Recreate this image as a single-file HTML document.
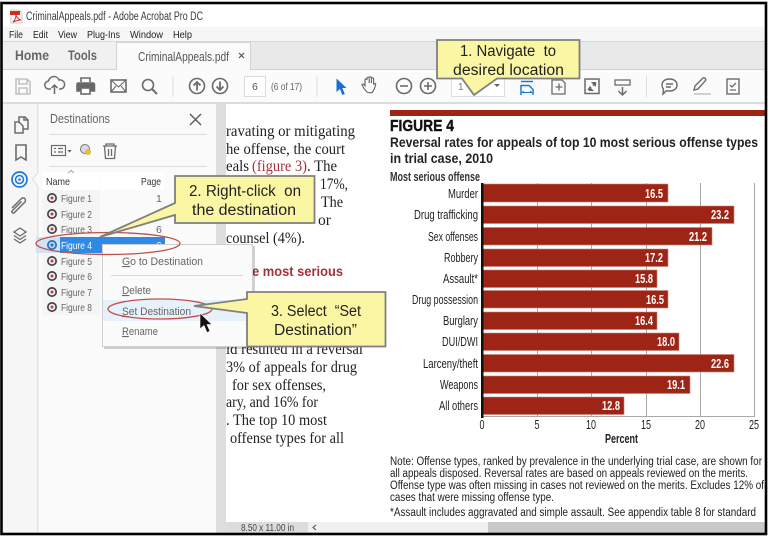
<!DOCTYPE html>
<html><head><meta charset="utf-8"><style>
html,body{margin:0;padding:0;background:#fff;width:769px;height:537px;overflow:hidden}
svg{display:block;position:absolute;left:0;top:0;filter:blur(.35px)}
text{white-space:pre}
.u{font-family:"Liberation Sans",sans-serif;fill:#3c3c3c}
.s{font-family:"Liberation Serif",serif;font-size:15.5px;fill:#222}
.c{font-family:"Liberation Sans",sans-serif;font-size:13px;fill:#222}
.v{font-family:"Liberation Sans",sans-serif;font-size:12.5px;font-weight:bold;fill:#fff}
.n{font-family:"Liberation Sans",sans-serif;font-size:11.5px;fill:#222}
.k{font-family:"Liberation Sans",sans-serif;font-size:15.5px;fill:#222}
.i{fill:none;stroke:#6b6b6b;stroke-width:1.6}
.b{fill:#9e2515;stroke:#c8857a;stroke-width:.6}
.g{stroke:#a8a8a8;stroke-width:1}
</style></head><body>
<svg width="769" height="537" viewBox="0 0 769 537" xmlns="http://www.w3.org/2000/svg">
<rect width="769" height="537" fill="#fff"/>
<!-- chrome -->
<rect x="3" y="27" width="763" height="15" fill="#f6f6f6"/>
<rect x="3" y="41" width="763" height="1.5" fill="#d8d8d8"/>
<rect x="3" y="42" width="763" height="27" fill="#e9e9e9"/>
<rect x="3" y="42" width="114" height="27" fill="#f1f1f1"/>
<rect x="117" y="43" width="133" height="26" fill="#fafafa"/>
<rect x="116.5" y="42.5" width="134" height="27" fill="none" stroke="#d2d2d2"/>
<rect x="117" y="68" width="133" height="3" fill="#fafafa"/>
<rect x="3" y="69" width="114" height="1" fill="#d2d2d2"/>
<rect x="250" y="69" width="516" height="1" fill="#d2d2d2"/>
<rect x="3" y="70" width="763" height="33" fill="#fbfbfb"/>
<rect x="3" y="102" width="763" height="2" fill="#dcdcdc"/>
<!-- title icon -->
<path d="M11 10h8l3 3v10H11z" fill="#fff" stroke="#bbb" stroke-width=".8"/>
<rect x="10" y="11" width="10" height="4" fill="#d42b1e"/>
<path d="M13 22c2-2 3-4 3-7 1 3 2 4 5 5-3 0-5 1-8 2z" fill="none" stroke="#d42b1e"/>
<text class="u" x="26" y="20" style="font-size:11.5px" textLength="177" lengthAdjust="spacingAndGlyphs">CriminalAppeals.pdf - Adobe Acrobat Pro DC</text>
<g>
<text class="u" style="fill:#222;font-size:10.5px" x="9" y="38" textLength="14" lengthAdjust="spacingAndGlyphs">File</text>
<text class="u" style="fill:#222;font-size:10.5px" x="33" y="38" textLength="15" lengthAdjust="spacingAndGlyphs">Edit</text>
<text class="u" style="fill:#222;font-size:10.5px" x="58" y="38" textLength="19" lengthAdjust="spacingAndGlyphs">View</text>
<text class="u" style="fill:#222;font-size:10.5px" x="87" y="38" textLength="33" lengthAdjust="spacingAndGlyphs">Plug-Ins</text>
<text class="u" style="fill:#222;font-size:10.5px" x="130" y="38" textLength="33" lengthAdjust="spacingAndGlyphs">Window</text>
<text class="u" style="fill:#222;font-size:10.5px" x="173" y="38" textLength="19" lengthAdjust="spacingAndGlyphs">Help</text>
</g>
<text class="u" x="15" y="60" style="font-size:13.5px;font-weight:bold;fill:#666" textLength="34" lengthAdjust="spacingAndGlyphs">Home</text>
<text class="u" x="68" y="60" style="font-size:13.5px;font-weight:bold;fill:#666" textLength="29" lengthAdjust="spacingAndGlyphs">Tools</text>
<text class="u" x="138" y="61" style="font-size:12.5px;fill:#555" textLength="91" lengthAdjust="spacingAndGlyphs">CriminalAppeals.pdf</text>
<path d="M239 53l5 5M244 53l-5 5" stroke="#555" stroke-width="1.2"/>

<!-- toolbar icons -->
<g class="i">
<path d="M16 79h11l3 3v12H16zM19 79v5h8v-5M19 94v-6h8v6" stroke="#c2c2c2"/>
<path d="M51 89h-2a4 4 0 0 1-.5-8 5.500 5.500 0 0 1 10.500-1 4.500 4.500 0 0 1 2 9h-2M54.500 94v-9M51.500 88l3-3 3 3" stroke-width="1.5"/>
<path d="M81 82v-4h9v4"/>
<path d="M78 83h15a1.5 1.5 0 0 1 1.5 1.500V91H77v-6.500A1.500 1.500 0 0 1 78 83z" fill="#666"/>
<rect x="81" y="88" width="9" height="6" fill="#fff"/>
<rect x="111" y="80" width="15" height="12"/>
<path d="M111 80l7.5 7 7.5-7M111 92l5-6M126 92l-5-6" stroke-width="1.100"/>
<circle cx="148" cy="85" r="5.5"/><path d="M152 89l5 5" stroke-width="2"/>
<circle cx="197" cy="86" r="7.500"/><path d="M197 90.500v-8.500M193.500 85.500l3.500-3.500 3.500 3.500" stroke-width="1.800"/>
<circle cx="220" cy="86" r="7.500"/><path d="M220 81.500v8.500M216.500 86.500l3.500 3.500 3.500-3.500" stroke-width="1.800"/>
<path d="M367 92c-2-2-4-5-5-7 0-1.500 2-1 3 .5V80c0-1.500 2-1.500 2 0v-1.500c0-1.500 2.200-1.500 2.200 0V78c0-1.500 2.200-1.500 2.200 0v1c0-1.500 2.200-1.500 2.200 0v5l.6 0c1-1 1.800-.5 1.400 1-.7 3-1.600 5-3 7-.4 1-5 1-5.600 0zM369.200 79v4M371.400 78.500v4.500M373.600 79v4" stroke-width="1.200"/>
<circle cx="404" cy="86" r="7.500"/><path d="M400 86h8"/>
<circle cx="428" cy="86" r="7.500"/><path d="M424 86h8M428 82v8"/>
</g>
<rect x="172.5" y="76" width="1" height="21" fill="#dedede"/>
<rect x="244.5" y="76.5" width="21" height="20" fill="#fff" stroke="#dcdcdc"/>
<text class="u" x="252" y="90" style="font-size:10.5px;fill:#555">6</text>
<text class="u" x="271" y="90" style="font-size:10.5px;fill:#666" textLength="31" lengthAdjust="spacingAndGlyphs">(6 of 17)</text>
<rect x="316.5" y="76" width="1" height="21" fill="#dedede"/>
<path d="M336.500 78.500l10 9.500h-4.200l2.500 6-2.500 1-2.300-6-3.500 3z" fill="#1470d0"/>
<rect x="451.5" y="76.5" width="53" height="20" fill="#fff" stroke="#dcdcdc"/>
<text class="u" x="458" y="90" style="font-size:10px;fill:#777">1</text>
<path d="M494 84h6l-3 3z" fill="#666"/>
<g fill="none" stroke="#1878d8" stroke-width="1.500">
<path d="M521 81.500h12M521 95V85.500h8l4 4V95"/><path d="M522 92.500h10M522 92.500l2-1.500M532 92.500l-2-1.500" stroke-width="1"/>
</g>
<g class="i">
<path d="M552 80h10l3 3v11h-13zM559 83.500v7M555.500 87h7" stroke-width="1.300"/>
<rect x="585" y="79" width="14" height="14.500" stroke-width="1.500"/>
<path d="M588 90l3-3M596 82.500l-3 3" stroke-width="1.800"/>
</g>
<path d="M589 86v5h5zM596 87v-5h-5z" fill="#666"/>
<g class="i">
<rect x="615" y="80" width="15" height="5" stroke-width="1.300"/>
<path d="M622.500 87v7.500M618.500 91l4 4 4-4" stroke-width="1.500"/>
<path d="M662 85c0-4 3.500-6 7.500-6s7.500 2 7.500 6-3.500 6-7.500 6c-1 0-2 0-3-.3L663 94l.5-4.500C662.500 88 662 87 662 85zM666 84h7M666 87h5" stroke-width="1.400"/>
<path d="M694 90l1-4 8-8c1-1 3.500 1 2.500 2.500L698 89z" stroke-width="1.400"/>
<rect x="727" y="79" width="12" height="15" stroke-width="1.400"/>
<path d="M730 85l2 2 4-4M730 90h6" stroke-width="1.300"/>
</g>
<rect x="694" y="93" width="17" height="2" fill="#d0d0d0"/>
<rect x="646" y="76" width="1" height="21" fill="#dedede"/>

<!-- left rail and panel -->
<rect x="3" y="104" width="34" height="418" fill="#f6f6f6"/>
<rect x="37" y="104" width="1.5" height="429" fill="#e2e2e2"/>
<rect x="38.5" y="104" width="178" height="429" fill="#fafafa"/>
<rect x="216" y="104" width="10" height="429" fill="#dedede"/>
<rect x="3" y="522" width="34" height="11" fill="#f6f6f6"/>
<g class="i">
<path d="M19 123v-6h6l3 3v9h-5M24 117v3h4M15 122h4l4 4v7h-8z" stroke-width="1.500"/>
<path d="M16 145h10v15l-5-3-5 3z" stroke-width="1.600"/>
<path d="M17 213l9-9c3-3 6 1 3.500 3.500l-10 10c-1.500 1.500-3.500-.5-2-2l9-9" stroke-width="1.500" transform="translate(-5 -5)"/>
<path d="M20 228l-6 4 6 4 6-4zM14 235.500l6 4 6-4M14 239l6 4 6-4" stroke-width="1.300"/>
</g>
<circle cx="19.5" cy="179.500" r="7.500" fill="none" stroke="#1878d8" stroke-width="1.700"/>
<circle cx="19.5" cy="179.500" r="4" fill="none" stroke="#1878d8" stroke-width="1.500"/>
<circle cx="19.5" cy="179.500" r="1.300" fill="#1878d8"/>
<path d="M38.500 172l-6 7.500 6 7.500" fill="#fafafa" stroke="#dcdcdc"/>

<text class="u" x="50" y="123" style="font-size:12.5px;fill:#666" textLength="60" lengthAdjust="spacingAndGlyphs">Destinations</text>
<path d="M190 114l11 11M201 114l-11 11" stroke="#555" stroke-width="1.300"/>
<rect x="49" y="134" width="158" height="1" fill="#dedede"/>
<rect x="49" y="166" width="158" height="1" fill="#dedede"/>
<g class="i" stroke-width="1.200">
<rect x="51.5" y="145.500" width="14" height="10" stroke-width="1.200"/>
<path d="M54 148.500h2M54 152h2M58 148.500h5M58 152h5" stroke-width="1.200"/>
<path d="M103 146h14M106 146v-2h8v2M104.500 146l1 12.500h9l1-12.500M108.500 149v7M111.500 149v7" stroke-width="1.300"/>
</g>
<path d="M67.500 150h4l-2 2.500z" fill="#555"/>
<circle cx="85" cy="149" r="4.500" fill="#d8d8e0" stroke="#777"/>
<circle cx="88" cy="152" r="3" fill="#eab93d"/>

<rect x="42" y="172" width="57" height="18" fill="#fff"/>
<rect x="100" y="172" width="64" height="18" fill="#fff"/>
<rect x="42" y="190" width="58" height="125" fill="#f2f2f2" opacity=".65"/>
<path d="M68 173l3-2.500 3 2.500" fill="none" stroke="#888" stroke-width=".8"/>
<text class="u" x="46" y="185" style="font-size:10.5px;fill:#333" textLength="24" lengthAdjust="spacingAndGlyphs">Name</text>
<text class="u" x="141" y="185" style="font-size:10.5px;fill:#333" textLength="20" lengthAdjust="spacingAndGlyphs">Page</text>

<!-- rows -->
<rect x="36" y="237" width="24" height="16" fill="#cfe3f7"/>
<rect x="60" y="237" width="105" height="16" fill="#2f8ae6"/>
<g>
<g fill="#444"><circle cx="52" cy="198" r="5"/><circle cx="52" cy="214" r="5"/><circle cx="52" cy="229" r="5"/><circle cx="52" cy="261" r="5"/><circle cx="52" cy="276" r="5"/><circle cx="52" cy="292" r="5"/><circle cx="52" cy="307" r="5"/></g>
<circle cx="52" cy="245" r="5" fill="#2d6fb8"/>
<g fill="#eee"><circle cx="52" cy="198" r="3.300"/><circle cx="52" cy="214" r="3.300"/><circle cx="52" cy="229" r="3.300"/><circle cx="52" cy="261" r="3.300"/><circle cx="52" cy="276" r="3.300"/><circle cx="52" cy="292" r="3.300"/><circle cx="52" cy="307" r="3.300"/><circle cx="52" cy="245" r="3.300" fill="#b8d4f0"/></g>
</g>
<g fill="#c8385a"><circle cx="52" cy="198" r="1.500"/><circle cx="52" cy="214" r="1.500"/><circle cx="52" cy="229" r="1.500"/><circle cx="52" cy="261" r="1.500"/><circle cx="52" cy="276" r="1.500"/><circle cx="52" cy="292" r="1.500"/><circle cx="52" cy="307" r="1.500"/></g>
<circle cx="52" cy="245" r="1.5" fill="#2d6fb8"/>
<g style="font-size:10.5px">
<text class="u" style="fill:#666" x="61" y="202" textLength="31" lengthAdjust="spacingAndGlyphs">Figure 1</text>
<text class="u" style="fill:#666" x="61" y="218" textLength="31" lengthAdjust="spacingAndGlyphs">Figure 2</text>
<text class="u" style="fill:#666" x="61" y="233" textLength="31" lengthAdjust="spacingAndGlyphs">Figure 3</text>
<text class="u" style="fill:#fff" x="61" y="249" textLength="31" lengthAdjust="spacingAndGlyphs">Figure 4</text>
<text class="u" style="fill:#666" x="61" y="265" textLength="31" lengthAdjust="spacingAndGlyphs">Figure 5</text>
<text class="u" style="fill:#666" x="61" y="280" textLength="31" lengthAdjust="spacingAndGlyphs">Figure 6</text>
<text class="u" style="fill:#666" x="61" y="296" textLength="31" lengthAdjust="spacingAndGlyphs">Figure 7</text>
<text class="u" style="fill:#666" x="61" y="311" textLength="31" lengthAdjust="spacingAndGlyphs">Figure 8</text>
<text class="u" style="fill:#666" x="156" y="202">1</text>
<text class="u" style="fill:#666" x="156" y="233">6</text>
<text class="u" style="fill:#fff" x="156" y="249">6</text>
</g>

<!-- page body text -->
<text class="s" x="226" y="136" textLength="129" lengthAdjust="spacingAndGlyphs">ravating or mitigating</text>
<text class="s" x="226" y="154" textLength="119" lengthAdjust="spacingAndGlyphs">he offense, the court</text>
<text class="s" x="226" y="171" textLength="23" lengthAdjust="spacingAndGlyphs">eals</text>
<text class="s" x="252" y="171" style="fill:#a5323a" textLength="55" lengthAdjust="spacingAndGlyphs">(figure 3)</text>
<text class="s" x="307" y="171" textLength="30" lengthAdjust="spacingAndGlyphs">. The</text>
<text class="s" x="320" y="189" textLength="28" lengthAdjust="spacingAndGlyphs">17%,</text>
<text class="s" x="321" y="207" textLength="22" lengthAdjust="spacingAndGlyphs">The</text>
<text class="s" x="318" y="225" textLength="13" lengthAdjust="spacingAndGlyphs">or</text>
<text class="s" x="226" y="243" textLength="79" lengthAdjust="spacingAndGlyphs">counsel (4%).</text>
<text x="252" y="276" font-family="Liberation Sans,sans-serif" font-size="14" font-weight="bold" fill="#a5323a" textLength="91" lengthAdjust="spacingAndGlyphs">e most serious</text>
<text class="s" x="226" y="354" textLength="137" lengthAdjust="spacingAndGlyphs">id resulted in a reversal</text>
<text class="s" x="226" y="372" textLength="131" lengthAdjust="spacingAndGlyphs">3% of appeals for drug</text>
<text class="s" x="232" y="390" textLength="94" lengthAdjust="spacingAndGlyphs">for sex offenses,</text>
<text class="s" x="226" y="407" textLength="92" lengthAdjust="spacingAndGlyphs">ary, and 16% for</text>
<text class="s" x="226" y="425" textLength="101" lengthAdjust="spacingAndGlyphs">. The top 10 most</text>
<text class="s" x="230" y="443" textLength="114" lengthAdjust="spacingAndGlyphs">offense types for all</text>

<!-- figure -->
<rect x="390" y="110" width="375" height="6" fill="#9e2515"/>
<text x="390" y="131" font-family="Liberation Sans,sans-serif" font-size="16" font-weight="bold" fill="#111" stroke="#111" stroke-width=".4" textLength="64" lengthAdjust="spacingAndGlyphs">FIGURE 4</text>
<text x="390" y="147" font-family="Liberation Sans,sans-serif" font-size="14" font-weight="bold" fill="#222" textLength="368" lengthAdjust="spacingAndGlyphs">Reversal rates for appeals of top 10 most serious offense types</text>
<text x="390" y="163" font-family="Liberation Sans,sans-serif" font-size="14" font-weight="bold" fill="#222" textLength="103" lengthAdjust="spacingAndGlyphs">in trial case, 2010</text>
<text x="390" y="181" font-family="Liberation Sans,sans-serif" font-size="13" font-weight="bold" fill="#333" textLength="90" lengthAdjust="spacingAndGlyphs">Most serious offense</text>

<g class="g">
<path d="M537.5 183v234M591.5 183v234M646.5 183v234M700.5 183v234M754.5 183v234M483 416.500h272" fill="none"/>
</g>
<rect class="b" x="483" y="184" width="185" height="18"/>
<rect class="b" x="483" y="206" width="251" height="17.5"/>
<rect class="b" x="483" y="227.5" width="229" height="17.5"/>
<rect class="b" x="483" y="249" width="185" height="17.5"/>
<rect class="b" x="483" y="270" width="174" height="17.5"/>
<rect class="b" x="483" y="290.5" width="185" height="17.5"/>
<rect class="b" x="483" y="312" width="174" height="17.5"/>
<rect class="b" x="483" y="333" width="196" height="17.5"/>
<rect class="b" x="483" y="354.5" width="251" height="17.5"/>
<rect class="b" x="483" y="376" width="207" height="17.5"/>
<rect class="b" x="483" y="397" width="141" height="17.5"/>
<rect x="481" y="183" width="2.5" height="235" fill="#111"/>

<g text-anchor="end">
<text class="c" x="478" y="198" textLength="30" lengthAdjust="spacingAndGlyphs">Murder</text>
<text class="c" x="478" y="219" textLength="64" lengthAdjust="spacingAndGlyphs">Drug trafficking</text>
<text class="c" x="478" y="241" textLength="50" lengthAdjust="spacingAndGlyphs">Sex offenses</text>
<text class="c" x="478" y="262" textLength="34" lengthAdjust="spacingAndGlyphs">Robbery</text>
<text class="c" x="478" y="283" textLength="35" lengthAdjust="spacingAndGlyphs">Assault*</text>
<text class="c" x="478" y="304" textLength="66" lengthAdjust="spacingAndGlyphs">Drug possession</text>
<text class="c" x="478" y="325" textLength="35" lengthAdjust="spacingAndGlyphs">Burglary</text>
<text class="c" x="478" y="346" textLength="36" lengthAdjust="spacingAndGlyphs">DUI/DWI</text>
<text class="c" x="478" y="368" textLength="55" lengthAdjust="spacingAndGlyphs">Larceny/theft</text>
<text class="c" x="478" y="389" textLength="38" lengthAdjust="spacingAndGlyphs">Weapons</text>
<text class="c" x="478" y="410" textLength="39" lengthAdjust="spacingAndGlyphs">All others</text>
<text class="v" x="663" y="198" textLength="18" lengthAdjust="spacingAndGlyphs">16.5</text>
<text class="v" x="729" y="219" textLength="18" lengthAdjust="spacingAndGlyphs">23.2</text>
<text class="v" x="707" y="241" textLength="18" lengthAdjust="spacingAndGlyphs">21.2</text>
<text class="v" x="663" y="262" textLength="18" lengthAdjust="spacingAndGlyphs">17.2</text>
<text class="v" x="653" y="283" textLength="18" lengthAdjust="spacingAndGlyphs">15.8</text>
<text class="v" x="664" y="304" textLength="18" lengthAdjust="spacingAndGlyphs">16.5</text>
<text class="v" x="653" y="325" textLength="18" lengthAdjust="spacingAndGlyphs">16.4</text>
<text class="v" x="675" y="346" textLength="18" lengthAdjust="spacingAndGlyphs">18.0</text>
<text class="v" x="729" y="368" textLength="18" lengthAdjust="spacingAndGlyphs">22.6</text>
<text class="v" x="685" y="389" textLength="18" lengthAdjust="spacingAndGlyphs">19.1</text>
<text class="v" x="620" y="410" textLength="18" lengthAdjust="spacingAndGlyphs">12.8</text>
</g>
<g text-anchor="middle">
<text class="c" x="482" y="429" textLength="5" lengthAdjust="spacingAndGlyphs">0</text><text class="c" x="537" y="429" textLength="5" lengthAdjust="spacingAndGlyphs">5</text>
<text class="c" x="591" y="429" textLength="10" lengthAdjust="spacingAndGlyphs">10</text><text class="c" x="646" y="429" textLength="10" lengthAdjust="spacingAndGlyphs">15</text>
<text class="c" x="700" y="429" textLength="10" lengthAdjust="spacingAndGlyphs">20</text><text class="c" x="754" y="429" textLength="10" lengthAdjust="spacingAndGlyphs">25</text>
</g>
<text x="605" y="443" font-family="Liberation Sans,sans-serif" font-size="13" font-weight="bold" fill="#222" textLength="33" lengthAdjust="spacingAndGlyphs">Percent</text>

<text class="n" x="390" y="465" textLength="372" lengthAdjust="spacingAndGlyphs">Note: Offense types, ranked by prevalence in the underlying trial case, are shown for</text>
<text class="n" x="390" y="477" textLength="358" lengthAdjust="spacingAndGlyphs">all appeals disposed. Reversal rates are based on appeals reviewed on the merits.</text>
<text class="n" x="390" y="489" textLength="374" lengthAdjust="spacingAndGlyphs">Offense type was often missing in cases not reviewed on the merits. Excludes 12% of</text>
<text class="n" x="390" y="501" textLength="164" lengthAdjust="spacingAndGlyphs">cases that were missing offense type.</text>
<text class="n" x="390" y="516" textLength="366" lengthAdjust="spacingAndGlyphs">*Assault includes aggravated and simple assault. See appendix table 8 for standard</text>

<!-- status bar -->
<rect x="226" y="522" width="82" height="11" fill="#dcdcdc"/>
<rect x="308" y="522" width="180" height="11" fill="#f0f0f0"/>
<rect x="488" y="522" width="278" height="11" fill="#c9c9c9"/>
<text class="u" x="241" y="531" style="font-size:10px;fill:#444" textLength="53" lengthAdjust="spacingAndGlyphs">8.50 x 11.00 in</text>
<path d="M316 525l-3 2.500 3 2.500" fill="none" stroke="#444"/>

<!-- context menu -->
<rect x="104" y="246" width="151" height="103" fill="#000" opacity=".18"/>
<rect x="102.5" y="244.5" width="150" height="102" fill="#fbfbfb" stroke="#cfcfcf"/>
<rect x="103" y="300" width="149" height="21" fill="#e6f1fb"/>
<rect x="111" y="275" width="132" height="1" fill="#dadada"/>
<g>
<text class="u" style="fill:#666;font-size:11px" x="122" y="265" textLength="81" lengthAdjust="spacingAndGlyphs"><tspan text-decoration="underline">G</tspan>o to Destination</text>
<text class="u" style="fill:#666;font-size:11px" x="122" y="294" textLength="29" lengthAdjust="spacingAndGlyphs"><tspan text-decoration="underline">D</tspan>elete</text>
<text class="u" style="fill:#666;font-size:11px" x="122" y="315" textLength="69" lengthAdjust="spacingAndGlyphs"><tspan text-decoration="underline">S</tspan>et Destination</text>
<text class="u" style="fill:#666;font-size:11px" x="122" y="335" textLength="36" lengthAdjust="spacingAndGlyphs"><tspan text-decoration="underline">R</tspan>ename</text>
</g>

<!-- ellipses -->
<ellipse cx="108" cy="243.5" rx="72" ry="11" fill="none" stroke="#c0504d" stroke-width="1.300"/>
<ellipse cx="160" cy="309" rx="52" ry="10" fill="none" stroke="#c0504d" stroke-width="1.300"/>

<!-- callouts -->
<g fill="#fbf6a4" stroke="#7f7f7f" stroke-width="1.800">
<path d="M437 40h142.500v38.500H497L474 95l-12-16.500h-25z"/>
<path d="M175 176h139.500v47H175v-8L100 237l75-34z"/>
<path d="M247 292h138.500v54.500H247V313l-53-7 53-7z"/>
</g>
<g class="k">
<text class="k" x="460" y="56" textLength="96" lengthAdjust="spacingAndGlyphs">1. Navigate  to</text>
<text class="k" x="453" y="75" textLength="111" lengthAdjust="spacingAndGlyphs">desired location</text>
<text class="k" x="189" y="196" textLength="112" lengthAdjust="spacingAndGlyphs">2. Right-click  on</text>
<text class="k" x="192" y="215" textLength="104" lengthAdjust="spacingAndGlyphs">the destination</text>
<text class="k" x="271" y="316" textLength="90" lengthAdjust="spacingAndGlyphs">3. Select  “Set</text>
<text class="k" x="274" y="335" textLength="83" lengthAdjust="spacingAndGlyphs">Destination”</text>
</g>

<!-- cursor -->
<path d="M200 313v16l4-3.500 3 7 3-1.300-3-6.700h5z" fill="#111" stroke="#fff" stroke-width=".6"/>

<!-- outer frame -->
<rect x="1.5" y="3" width="764.5" height="531" fill="none" stroke="#000" stroke-width="2.600"/>
</svg>
</body></html>
